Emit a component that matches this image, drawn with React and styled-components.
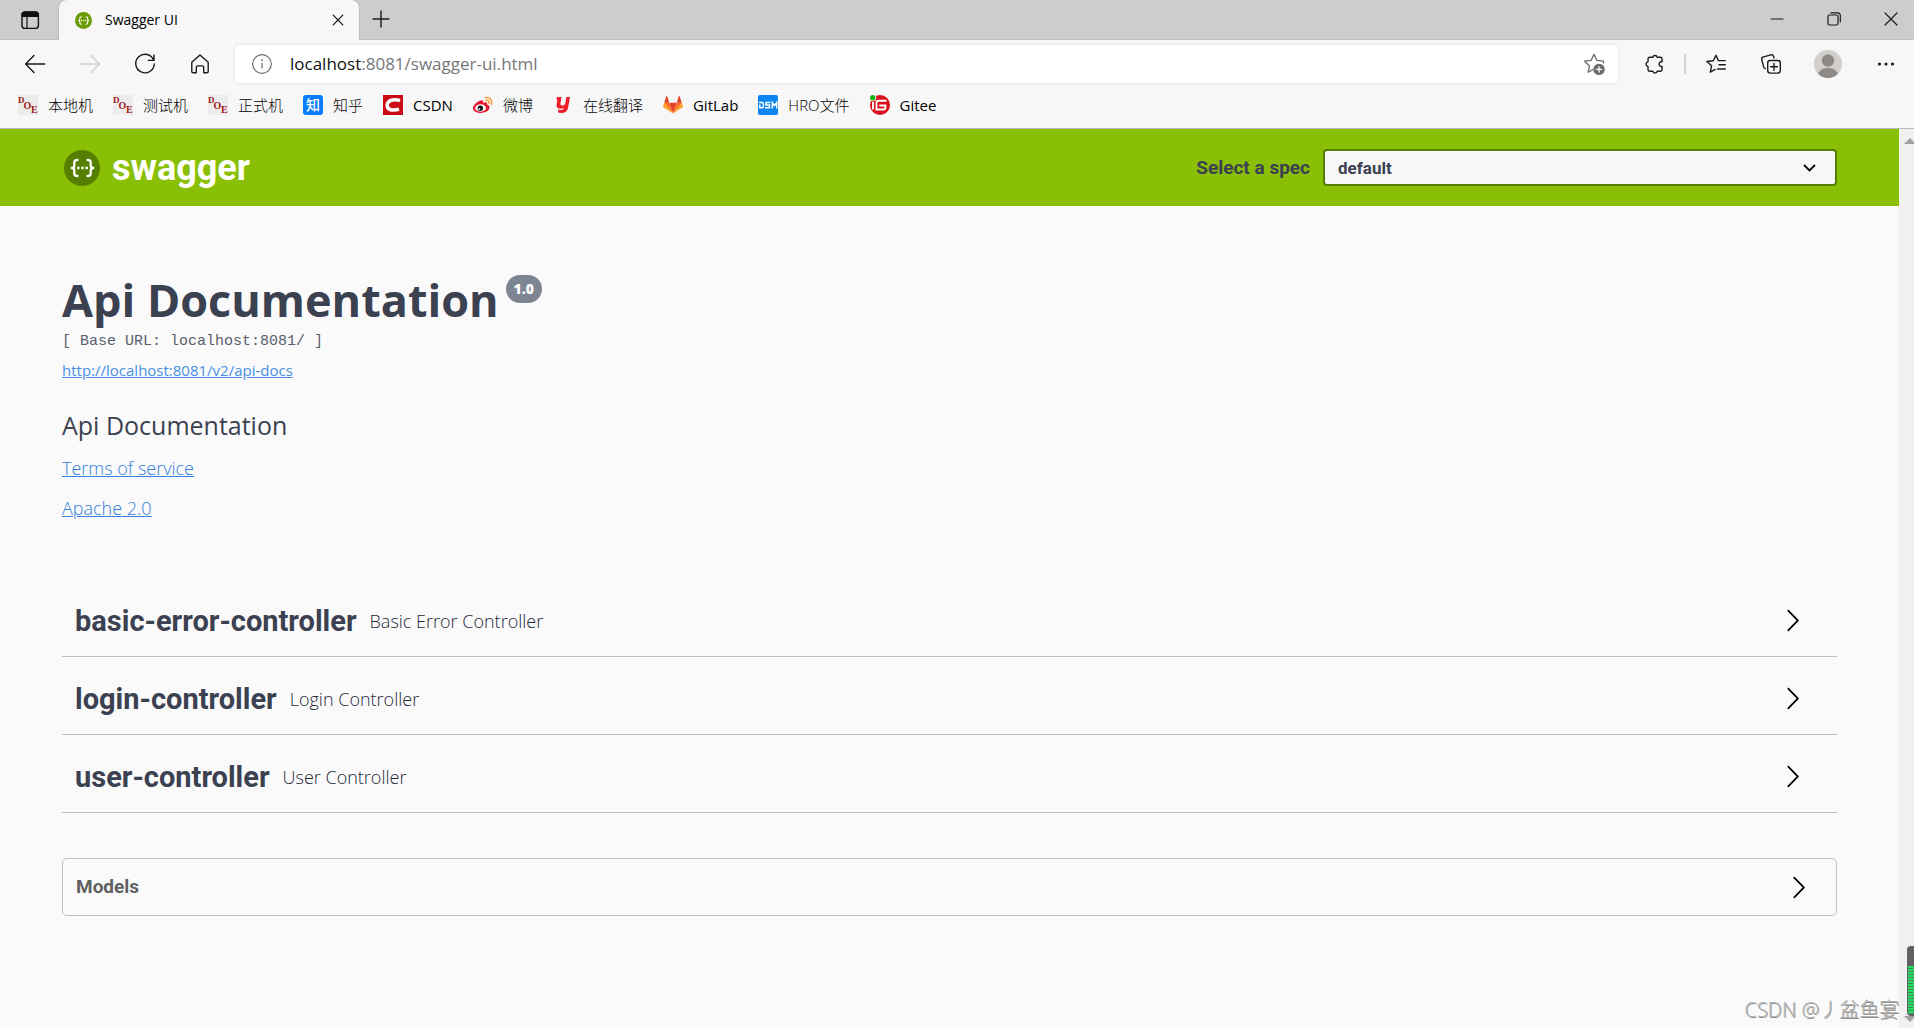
import React from 'react';
import styled, { createGlobalStyle } from 'styled-components';

const ui = `"Open Sans", "Noto Sans CJK SC", sans-serif`;
const heading = `Roboto, "Noto Sans", sans-serif`;

const GlobalStyle = createGlobalStyle`
  *, *::before, *::after { box-sizing: border-box; }
  body { margin: 0; background: #fafafa; font-family: ${ui}; color: #3b4151; }
  h1, h2, h3, p { margin: 0; }
  button { border: 0; padding: 0; background: none; font: inherit; color: inherit; cursor: pointer; }
  svg { display: block; flex: none; overflow: visible; }
`;

const Window = styled.div`
  position: relative;
  display: flex;
  flex-direction: column;
  min-height: 100vh;
`;

/* ---------- browser chrome ---------- */

const TitleBar = styled.div`
  display: flex;
  height: 40px;
  background: #cdcdcd;
  color: #111;
  box-shadow: inset 0 -1px 0 #bdbdbd;
`;

const TabActions = styled.button`
  display: grid;
  place-items: center;
  width: 59px;
`;

const Tab = styled.div`
  display: flex;
  align-items: center;
  width: 300px;
  padding: 0 13px 0 16px;
  border-radius: 8px 8px 0 0;
  background: #f7f7f7;
  box-shadow: 0 0 2px #999;
  clip-path: inset(0 -4px 0 -4px);
`;

const TabTitle = styled.span`
  flex: 1;
  margin-left: 13px;
  color: #000;
  font-size: 14px;
  line-height: 20px;
`;

const IconButton = styled.button`
  display: grid;
  place-items: center;
  width: ${(p) => p.$width || 55}px;
  height: 38px;
  color: ${(p) => (p.disabled ? '#cfcfcf' : '#1b1b1b')};
`;

const WindowControls = styled.div`
  display: flex;
  gap: 11px;
  margin-left: auto;
`;

const Toolbar = styled.div`
  display: flex;
  align-items: center;
  height: 48px;
  padding: 0 1px 0 7px;
  background: #f7f7f7;
`;

const AddressBar = styled.div`
  display: flex;
  flex: 1;
  align-items: center;
  height: 38px;
  margin: 0 9px 0 8px;
  padding: 0 13px 0 17px;
  border-radius: 5px;
  background: #fff;
  box-shadow: 0 0 3px rgba(0, 0, 0, 0.12);
  color: #6e6e6e;
`;

const Address = styled.span`
  flex: 1;
  margin-left: 18px;
  font-size: 17px;
  line-height: 24px;
  color: #767676;
  b { font-weight: 400; color: #111; }
`;

const Divider = styled.span`
  width: 2px;
  height: 20px;
  margin: 0 2px;
  background: #d3d3d3;
`;

const Bookmarks = styled.nav`
  display: flex;
  align-items: center;
  gap: 20px;
  height: 41px;
  padding: 0 18px 6px;
  border-bottom: 1px solid #b9b9b9;
  background: #f7f7f7;
`;

const Bookmark = styled.a`
  display: flex;
  align-items: center;
  gap: 10px;
  color: #000;
  font-size: 15px;
  font-weight: ${(p) => (p.$latin ? 400 : 300)};
  line-height: 22px;
  text-decoration: none;
  white-space: nowrap;
`;

/* ---------- page ---------- */

const Viewport = styled.div`
  display: flex;
  flex: 1;
`;

const Page = styled.div`
  flex: 1;
  min-width: 0;
`;

const Scrollbar = styled.div`
  display: flex;
  flex-direction: column;
  justify-content: space-between;
  width: 15px;
  padding: 8px 0 5px;
  background: #f0f0f0;
`;

const Container = styled.div`
  max-width: 1825px;
  margin: 0 auto;
  padding: 0 25px;
`;

const TopBar = styled.header`
  background: #89bf04;
`;

const TopBarInner = styled(Container)`
  display: flex;
  align-items: center;
  justify-content: space-between;
  height: 77px;
`;

const Brand = styled.a`
  display: flex;
  align-items: center;
  gap: 12px;
  padding-left: 2px;
  color: #fff;
  font: 700 36px/44px ${heading};
  text-decoration: none;
`;

const SpecForm = styled.form`
  display: flex;
  align-items: center;
  gap: 13px;
`;

const SpecLabel = styled.label`
  font: 700 19px/24px ${heading};
`;

const SelectBox = styled.div`
  position: relative;
  width: 514px;
  svg {
    position: absolute;
    right: 21px;
    top: 14px;
    pointer-events: none;
  }
`;

const SpecSelect = styled.select`
  appearance: none;
  width: 100%;
  height: 37px;
  padding: 0 13px;
  border: 2px solid #547f00;
  border-radius: 4px;
  background: #f7f7f7;
  color: #3b4151;
  font: 700 17px/24px ${heading};
`;

const Info = styled.section`
  display: flex;
  flex-direction: column;
  align-items: flex-start;
  padding: 66px 0 65px;
`;

const TitleRow = styled.div`
  display: flex;
  align-items: flex-start;
  gap: 7px;
`;

const Title = styled.h1`
  font-size: 45px;
  line-height: 56px;
  font-weight: 700;
`;

const Version = styled.span`
  margin-top: 3px;
  padding: 0 8px;
  border-radius: 14px;
  background: #7d8492;
  color: #fff;
  font-size: 14px;
  line-height: 28px;
  font-weight: 800;
`;

const BaseUrl = styled.code`
  color: #5a5f6d;
  font: 400 15px/28px "Liberation Mono", monospace;
`;

const Link = styled.a`
  color: ${(p) => (p.$small ? '#4990e2' : '#3480dc')};
  font-size: ${(p) => (p.$small ? 15 : 18)}px;
  font-weight: ${(p) => (p.$small ? 400 : 300)};
  line-height: ${(p) => (p.$small ? 28 : 24)}px;
`;

const Details = styled.div`
  display: flex;
  flex-direction: column;
  align-items: flex-start;
  gap: 16px;
  margin-top: 26px;
`;

const Description = styled.p`
  font-size: 25px;
  line-height: 30px;
`;

const TagList = styled.section`
  display: flex;
  flex-direction: column;
  gap: 6px;
`;

const Tag = styled.button`
  display: flex;
  align-items: center;
  gap: 13px;
  height: 72px;
  padding: 0 32px 0 13px;
  border-bottom: 1px solid #c0c0c2;
  text-align: left;
  svg { margin-left: auto; }
`;

const TagName = styled.span`
  font: 700 29px/36px ${heading};
`;

const TagText = styled.span`
  color: #23283a;
  font-size: 18px;
  font-weight: 300;
  line-height: 24px;
`;

const Models = styled.button`
  display: flex;
  align-items: center;
  justify-content: space-between;
  width: 100%;
  height: 58px;
  margin: 45px 0 110px;
  padding: 0 25px 0 13px;
  border: 1px solid #c0c0c2;
  border-radius: 5px;
  color: #606060;
  font: 700 19px/24px ${heading};
`;

const Watermark = styled.div`
  position: absolute;
  right: 15px;
  bottom: 4px;
  color: #b4b4b4;
  font-size: 20px;
  font-weight: 300;
  line-height: 28px;
  text-shadow: 1px 1px 0 #8f8f8f, -1px -1px 0 #fff;
`;

const Meter = styled.div`
  position: absolute;
  right: 0;
  bottom: 12px;
  width: 7px;
  height: 70px;
  padding: 20px 0 0 1px;
  border-radius: 4px 0 0 4px;
  background: #606060;
  &::after {
    content: '';
    display: block;
    height: 48px;
    background: repeating-linear-gradient(#22dd62 0 2px, #4a8a5c 2px 3px);
  }
`;

/* ---------- drawings ---------- */

const Line = ({ size = 20, w = 1.2, children, ...rest }) => (
  <svg width={size} height={size} viewBox="0 0 20 20" fill="none" stroke="currentColor"
    strokeWidth={w} strokeLinecap="round" strokeLinejoin="round" aria-hidden="true" {...rest}>
    {children}
  </svg>
);

const TabActionsIcon = () => (
  <Line>
    <rect x="2" y="2" width="16.4" height="16.4" rx="3" strokeWidth="1.4" />
    <path d="M2 5a3 3 0 0 1 3-3h10.400a3 3 0 0 1 3 3v1.300H2z" fill="currentColor" />
    <path d="M7 6v12.400" />
  </Line>
);

const SwaggerMark = ({ size, fill }) => (
  <svg width={size} height={size} viewBox="0 0 36 36" aria-hidden="true">
    <circle cx="18" cy="18" r="18" fill={fill} />
    <g fill="none" stroke="#fff" strokeWidth="2.300" strokeLinecap="round" strokeLinejoin="round">
      <path d="M13.500 10c-2.600 0-3.200.8-3.200 2.600v2.600c0 1.800-.8 2.800-2.600 2.800 1.800 0 2.600 1 2.600 2.800v2.600c0 1.800.6 2.600 3.200 2.600" />
      <path d="M23.500 10c2.600 0 3.200.8 3.200 2.600v2.600c0 1.800.8 2.800 2.600 2.800-1.800 0-2.600 1-2.600 2.800v2.600c0 1.800-.6 2.600-3.200 2.600" />
    </g>
    <g fill="#fff">
      <circle cx="14.300" cy="18" r="1.400" />
      <circle cx="18.500" cy="18" r="1.400" />
      <circle cx="22.700" cy="18" r="1.400" />
    </g>
  </svg>
);

const Arrow = () => (
  <svg width="25" height="25" viewBox="0 0 20 20" aria-hidden="true">
    <path d="M13.250 10L6.109 2.580c-.268-.27-.268-.707 0-.979.268-.27.701-.27.969 0l7.830 7.908c.268.271.268.709 0 .979l-7.830 7.908c-.268.271-.701.270-.969 0-.268-.269-.268-.707 0-.979L13.250 10z" />
  </svg>
);

const DoeIcon = () => (
  <svg width="20" height="20" viewBox="0 0 20 20" aria-hidden="true">
    <rect width="20" height="20" fill="#ececec" />
    <g fill="#a01818" fontFamily="Liberation Serif, serif" fontWeight="700">
      <text x="0" y="8" fontSize="9">D</text>
      <text x="5.500" y="13.500" fontSize="10">O</text>
      <text x="13" y="18" fontSize="10">E</text>
    </g>
  </svg>
);

const ZhihuIcon = () => (
  <svg width="20" height="20" viewBox="0 0 20 20" aria-hidden="true">
    <rect width="20" height="20" rx="3" fill="#0a7cff" />
    <text x="3" y="15" fontSize="14" fontWeight="500" fill="#fff" fontFamily="Noto Sans CJK SC, sans-serif">知</text>
  </svg>
);

const CsdnIcon = () => (
  <svg width="20" height="20" viewBox="0 0 20 20" aria-hidden="true">
    <rect width="20" height="20" fill="#ca0c16" />
    <path d="M17 5.600C13 4.200 5 4 4.200 9.800c-.6 5.600 6 6 11.800 4.500" fill="none" stroke="#fff" strokeWidth="3.600" />
  </svg>
);

const WeiboIcon = () => (
  <svg width="20" height="20" viewBox="0 0 20 20" aria-hidden="true">
    <path d="M8 5.500c1.600-.6 2.600.2 2 2.300 3-1.200 4.800-.3 4.100 1.800 5 1.600 2.200 8.400-6.300 8.400C3 18 0 15.800 0 13c0-3 5-7 8-7.500z" fill="#e6162d" />
    <ellipse cx="7.600" cy="13" rx="5.400" ry="3.700" fill="#fff" />
    <circle cx="7.300" cy="13.300" r="2.700" fill="#111" />
    <circle cx="6.400" cy="13.900" r=".9" fill="#fff" />
    <g fill="none" stroke="#ff9933" strokeWidth="1.500" strokeLinecap="round">
      <path d="M12.500 2.600c4.200-.8 7.200 2.600 6 6.600" />
      <path d="M13 5.300c2.200-.4 3.500 1.200 2.900 3" />
    </g>
  </svg>
);

const YoudaoIcon = () => (
  <svg width="20" height="20" viewBox="0 0 20 20" aria-hidden="true">
    <path d="M4.900 2.100h3.600l-1 6c-.3 2.200.5 2.700 2.300 2.400 1.600-.3 2.300-1 2.700-3.100l.9-5.300H17l-2 11.200c-.8 4.200-4.800 5.300-9.900 4.300v-2.800c3.300.3 5.200 0 5.800-1.900-4.200 1.800-7.900.6-7.300-3.500l.8-4.600H3.500l.3-2.700z" fill="#ee1c27" />
  </svg>
);

const GitlabIcon = () => (
  <svg width="20" height="20" viewBox="0 0 20 20" aria-hidden="true">
    <path d="M10 18.600L13.700 7.800H6.300z" fill="#e24329" />
    <path d="M10 18.600L6.300 7.800H1.200zM10 18.600l3.700-10.800h5.100z" fill="#fc6d26" />
    <path d="M1.200 7.800L0 11.300c-.1.400 0 .7.300.9L10 18.600zM18.800 7.800l1.200 3.500c.1.400 0 .7-.3.900L10 18.600z" fill="#fca326" />
    <path d="M1.200 7.800h5.100L4.100 1.100c-.1-.3-.6-.3-.7 0zM18.800 7.800h-5.100l2.200-6.700c.1-.3.600-.3.700 0z" fill="#e24329" />
  </svg>
);

const DsmIcon = () => (
  <svg width="20" height="20" viewBox="0 0 20 20" aria-hidden="true">
    <rect width="20" height="20" rx="2" fill="#0a84f0" />
    <g fill="none" stroke="#fff" strokeWidth="1.500">
      <path d="M1 7.600h2.900q1.500 0 1.500 1.500v2.100q0 1.500-1.500 1.500H1.800V9.500" />
      <path d="M12.200 7.600H8v2.500h3.500v2.600H7" />
      <path d="M14.300 13.400V7.600l2.200 2.900 2.200-2.900v5.800" />
    </g>
  </svg>
);

const GiteeIcon = () => (
  <svg width="20" height="20" viewBox="0 0 20 20" aria-hidden="true">
    <circle cx="10" cy="10" r="10" fill="#d8101c" />
    <path d="M16.500 5.700H8.500q-2 0-2 2v6.800h6.900q2 0 2-2v-2H9.300M3 7v7.500" fill="none" stroke="#fff" strokeWidth="1.900" />
    <circle cx="2.700" cy="2.700" r="3.600" fill="#f7f7f7" />
    <circle cx="2.700" cy="2.700" r="2.700" fill="#12b212" />
  </svg>
);

const bookmarks = [
  ['本地机', DoeIcon],
  ['测试机', DoeIcon],
  ['正式机', DoeIcon],
  ['知乎', ZhihuIcon],
  ['CSDN', CsdnIcon, true],
  ['微博', WeiboIcon],
  ['在线翻译', YoudaoIcon],
  ['GitLab', GitlabIcon, true],
  ['HRO文件', DsmIcon],
  ['Gitee', GiteeIcon, true],
];

const tags = [
  ['basic-error-controller', 'Basic Error Controller'],
  ['login-controller', 'Login Controller'],
  ['user-controller', 'User Controller'],
];

const BrowserChrome = () => (
  <>
    <TitleBar>
      <TabActions aria-label="Tab actions"><TabActionsIcon /></TabActions>
      <Tab>
        <SwaggerMark size={17} fill="#6a9a04" />
        <TabTitle>Swagger UI</TabTitle>
        <button aria-label="Close tab">
          <Line size={16} w={1.5}><path d="M4 4l12 12M16 4L4 16" /></Line>
        </button>
      </Tab>
      <IconButton $width={43} aria-label="New tab">
        <Line w={1.4}><path d="M10 2v16M2 10h16" /></Line>
      </IconButton>
      <WindowControls>
        <IconButton $width={46} aria-label="Minimize">
          <Line><path d="M4 10h12" /></Line>
        </IconButton>
        <IconButton $width={46} aria-label="Restore">
          <Line>
            <rect x="4" y="6" width="10" height="10" rx="1.500" />
            <path d="M7 3.800h6.500a2.800 2.800 0 0 1 2.800 2.800V13" />
          </Line>
        </IconButton>
        <IconButton $width={46} aria-label="Close">
          <Line><path d="M4 4l12 12M16 4L4 16" /></Line>
        </IconButton>
      </WindowControls>
    </TitleBar>

    <Toolbar>
      <IconButton aria-label="Back">
        <Line w={1.4}><path d="M19.500 10H.6M9 1.500L.6 10 9 18.500" /></Line>
      </IconButton>
      <IconButton aria-label="Forward" disabled>
        <Line w={1.4}><path d="M.5 10h18.900M11 1.500l8.400 8.500L11 18.500" /></Line>
      </IconButton>
      <IconButton aria-label="Refresh">
        <Line w={1.4}><path d="M18.700 6.200A9.300 9.300 0 1 0 19.300 10M19 .9v5.500h-5.600" /></Line>
      </IconButton>
      <IconButton aria-label="Home">
        <Line w={1.4}>
          <path d="M1.800 8.300L10 .9l8.200 7.400v9.200a1.300 1.300 0 0 1-1.300 1.300h-3.200v-5.400a1.500 1.500 0 0 0-1.500-1.500H7.800a1.500 1.500 0 0 0-1.500 1.500v5.400H3.100a1.300 1.300 0 0 1-1.300-1.300z" />
        </Line>
      </IconButton>
      <AddressBar>
        <Line>
          <circle cx="10" cy="10" r="9.300" />
          <path d="M10 9v5" />
          <circle cx="10" cy="6.300" r=".4" />
        </Line>
        <Address><b>localhost</b>:8081/swagger-ui.html</Address>
        <Line size={22}>
          <path d="M18.500 9l.1-1.600-6-.7L10 1.200 7.400 6.700l-6 .7 4.500 4.100-1.200 6L9 15.100" />
          <circle cx="14.600" cy="14.900" r="4.600" fill="currentColor" />
          <path d="M14.600 12.600v4.600M12.300 14.900h4.600" stroke="#fff" />
        </Line>
      </AddressBar>
      <IconButton aria-label="Extensions">
        <Line w={1.4}>
          <path d="M4.600 3.300h3.200a2.300 2.300 0 0 1 4.500 0h3a1.700 1.700 0 0 1 1.700 1.700v2.800h-1a2.400 2.400 0 0 0 0 4.700h1v3a1.700 1.700 0 0 1-1.700 1.700h-3a2.300 2.300 0 0 1-4.500 0H4.600A1.700 1.700 0 0 1 3 15.500v-3a2.400 2.400 0 0 1 0-4.700V5a1.700 1.700 0 0 1 1.600-1.700z" />
        </Line>
      </IconButton>
      <Divider />
      <IconButton aria-label="Favorites">
        <Line w={1.4}>
          <path d="M19.300 6.600h-6.900L9.900 1.200 7.300 6.700l-6.400.8 4.700 4.200-1.300 6.500 4.800-2.800M13 10.800h6.300M11.500 15h7.800" />
        </Line>
      </IconButton>
      <IconButton aria-label="Collections">
        <Line w={1.4}>
          <rect x="6.700" y="6.500" width="12.600" height="12.600" rx="2.500" />
          <path d="M13 9.400v6.800M9.600 12.800h6.800M4.300 14.600A2.500 2.500 0 0 1 2.600 12.900L.8 5.800a2.400 2.400 0 0 1 1.700-2.900L9.800.9a2.400 2.400 0 0 1 2.900 1.700l.3 1.200" />
        </Line>
      </IconButton>
      <IconButton $width={60} aria-label="Profile">
        <svg width="28" height="28" viewBox="0 0 28 28" aria-hidden="true">
          <circle cx="14" cy="14" r="14" fill="#d2d0cd" />
          <circle cx="14" cy="10.500" r="6.200" fill="#8f8a86" />
          <path d="M4.200 24C6 16 22 16 23.800 24a14 14 0 0 1-19.600 0z" fill="#8f8a86" />
        </svg>
      </IconButton>
      <IconButton aria-label="Settings and more">
        <Line><g fill="currentColor"><circle cx="3.500" cy="10" r="1" /><circle cx="10" cy="10" r="1" /><circle cx="16.500" cy="10" r="1" /></g></Line>
      </IconButton>
    </Toolbar>

    <Bookmarks aria-label="Bookmarks">
      {bookmarks.map(([name, Icon, latin]) => (
        <Bookmark href="#" key={name} $latin={latin}><Icon />{name}</Bookmark>
      ))}
    </Bookmarks>
  </>
);

export default function App() {
  return (
    <Window>
      <GlobalStyle />
      <BrowserChrome />
      <Viewport>
        <Page>
          <TopBar>
            <TopBarInner>
              <Brand href="#"><SwaggerMark size={36} fill="#547f00" />swagger</Brand>
              <SpecForm>
                <SpecLabel htmlFor="spec">Select a spec</SpecLabel>
                <SelectBox>
                  <SpecSelect id="spec" defaultValue="default">
                    <option value="default">default</option>
                  </SpecSelect>
                  <svg width="13" height="10" viewBox="0 0 13 10" fill="none" stroke="#000" strokeWidth="1.800" aria-hidden="true">
                    <path d="M1 2l5.500 5.500L12 2" />
                  </svg>
                </SelectBox>
              </SpecForm>
            </TopBarInner>
          </TopBar>
          <Container as="main">
            <Info>
              <TitleRow>
                <Title>Api Documentation</Title>
                <Version>1.0</Version>
              </TitleRow>
              <BaseUrl>[ Base URL: localhost:8081/ ]</BaseUrl>
              <Link $small href="#">http://localhost:8081/v2/api-docs</Link>
              <Details>
                <Description>Api Documentation</Description>
                <Link href="#">Terms of service</Link>
                <Link href="#">Apache 2.0</Link>
              </Details>
            </Info>
            <TagList>
              {tags.map(([name, text]) => (
                <Tag key={name}>
                  <TagName>{name}</TagName>
                  <TagText>{text}</TagText>
                  <Arrow />
                </Tag>
              ))}
            </TagList>
            <Models>Models<Arrow /></Models>
          </Container>
        </Page>
        <Scrollbar aria-hidden="true">
          <svg width="15" height="7" viewBox="0 0 15 7"><path d="M5 7l6-6 4 4v2z" fill="#a0a0a0" /></svg>
          <svg width="15" height="7" viewBox="0 0 15 7"><path d="M5 0l6 6 4-4V0z" fill="#a0a0a0" /></svg>
        </Scrollbar>
      </Viewport>
      <Watermark>CSDN @丿盆鱼宴</Watermark>
      <Meter aria-hidden="true" />
    </Window>
  );
}
